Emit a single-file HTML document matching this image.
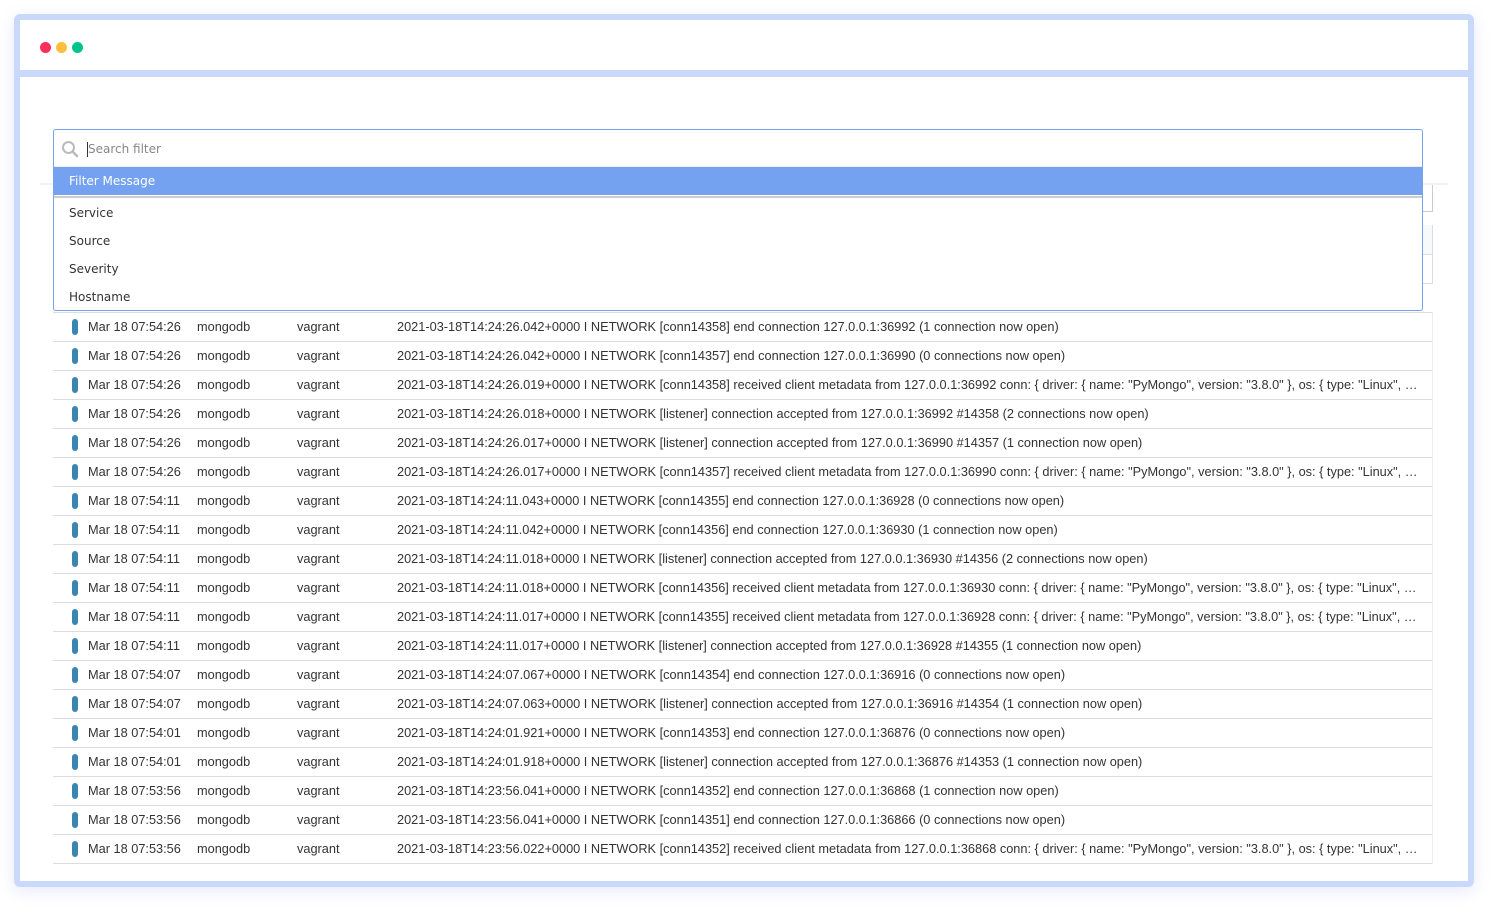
<!DOCTYPE html>
<html><head><meta charset="utf-8"><style>
*{box-sizing:border-box;margin:0;padding:0}
body{width:1494px;height:906px;background:#fff;position:relative;overflow:hidden;font-family:"Liberation Sans",sans-serif}
.frame{position:absolute;left:14px;top:14px;width:1460px;height:873px;border:6px solid #c9d9fb;border-radius:6px;background:#fff;box-shadow:0 4px 16px rgba(120,140,220,.18)}
.sep{position:absolute;left:14px;top:70px;width:1460px;height:7px;background:#c9d9fb}
.dot{position:absolute;top:42px;width:11px;height:11px;border-radius:50%}
.tbl{position:absolute;left:53px;top:312px;width:1380px;border-top:1px solid #ddd;border-right:1px solid #eee}
.row{height:29px;border-bottom:1px solid #ddd;position:relative;font-size:12.75px;color:#333;line-height:28px;white-space:nowrap}
.row .bar{position:absolute;left:19px;top:6px;width:6px;height:16px;border-radius:3px;background:#3a86b0}
.row span{position:absolute;top:0}
.c1{left:35px}.c2{left:144px}.c3{left:244px}.c4{left:344px;width:1025px;overflow:hidden;text-overflow:ellipsis}
.behind{position:absolute;left:53px;width:1380px;border-bottom:1px solid #ddd;border-right:1px solid #ddd}
.dd{position:absolute;left:53px;top:129px;width:1370px;height:182px;border:1px solid #75a2f0;border-radius:3px;background:#fff;font-family:"DejaVu Sans","Liberation Sans",sans-serif;font-size:12px;color:#333}
.dd .in{height:37px;position:relative;border-bottom:1px solid #eee}
.dd .in .ph{position:absolute;left:33px;top:12px;color:#888;border-left:1px solid #333;line-height:15px}
.hl{height:28px;background:#75a2f0;color:#fff;padding-left:15px;line-height:29px}
.gl{height:4px;border-top:1px solid #fff;border-bottom:1px solid #fff;background:#ccc}
.it{height:28px;line-height:28px;padding-left:15px}
</style></head><body>
<div class="frame"></div>
<div class="sep"></div>
<div class="dot" style="left:40px;background:#fc2f5b"></div>
<div class="dot" style="left:56px;background:#fdbf3b"></div>
<div class="dot" style="left:72px;background:#00c48c"></div>
<div style="position:absolute;left:40px;top:183px;width:1408px;height:2px;background:#f2f2f4"></div>
<div class="behind" style="top:185px;height:27px;border-color:#ccc"></div>
<div class="behind" style="top:225px;height:30px;background:#f8f9fb"></div>
<div class="behind" style="top:255px;height:29px"></div>
<div class="tbl">
<div class="row"><i class="bar"></i><span class="c1">Mar 18 07:54:26</span><span class="c2">mongodb</span><span class="c3">vagrant</span><span class="c4">2021-03-18T14:24:26.042+0000 I NETWORK [conn14358] end connection 127.0.0.1:36992 (1 connection now open)</span></div>
<div class="row"><i class="bar"></i><span class="c1">Mar 18 07:54:26</span><span class="c2">mongodb</span><span class="c3">vagrant</span><span class="c4">2021-03-18T14:24:26.042+0000 I NETWORK [conn14357] end connection 127.0.0.1:36990 (0 connections now open)</span></div>
<div class="row"><i class="bar"></i><span class="c1">Mar 18 07:54:26</span><span class="c2">mongodb</span><span class="c3">vagrant</span><span class="c4">2021-03-18T14:24:26.019+0000 I NETWORK [conn14358] received client metadata from 127.0.0.1:36992 conn: { driver: { name: "PyMongo", version: "3.8.0" }, os: { type: "Linux", name: "Linux" } }</span></div>
<div class="row"><i class="bar"></i><span class="c1">Mar 18 07:54:26</span><span class="c2">mongodb</span><span class="c3">vagrant</span><span class="c4">2021-03-18T14:24:26.018+0000 I NETWORK [listener] connection accepted from 127.0.0.1:36992 #14358 (2 connections now open)</span></div>
<div class="row"><i class="bar"></i><span class="c1">Mar 18 07:54:26</span><span class="c2">mongodb</span><span class="c3">vagrant</span><span class="c4">2021-03-18T14:24:26.017+0000 I NETWORK [listener] connection accepted from 127.0.0.1:36990 #14357 (1 connection now open)</span></div>
<div class="row"><i class="bar"></i><span class="c1">Mar 18 07:54:26</span><span class="c2">mongodb</span><span class="c3">vagrant</span><span class="c4">2021-03-18T14:24:26.017+0000 I NETWORK [conn14357] received client metadata from 127.0.0.1:36990 conn: { driver: { name: "PyMongo", version: "3.8.0" }, os: { type: "Linux", name: "Linux" } }</span></div>
<div class="row"><i class="bar"></i><span class="c1">Mar 18 07:54:11</span><span class="c2">mongodb</span><span class="c3">vagrant</span><span class="c4">2021-03-18T14:24:11.043+0000 I NETWORK [conn14355] end connection 127.0.0.1:36928 (0 connections now open)</span></div>
<div class="row"><i class="bar"></i><span class="c1">Mar 18 07:54:11</span><span class="c2">mongodb</span><span class="c3">vagrant</span><span class="c4">2021-03-18T14:24:11.042+0000 I NETWORK [conn14356] end connection 127.0.0.1:36930 (1 connection now open)</span></div>
<div class="row"><i class="bar"></i><span class="c1">Mar 18 07:54:11</span><span class="c2">mongodb</span><span class="c3">vagrant</span><span class="c4">2021-03-18T14:24:11.018+0000 I NETWORK [listener] connection accepted from 127.0.0.1:36930 #14356 (2 connections now open)</span></div>
<div class="row"><i class="bar"></i><span class="c1">Mar 18 07:54:11</span><span class="c2">mongodb</span><span class="c3">vagrant</span><span class="c4">2021-03-18T14:24:11.018+0000 I NETWORK [conn14356] received client metadata from 127.0.0.1:36930 conn: { driver: { name: "PyMongo", version: "3.8.0" }, os: { type: "Linux", name: "Linux" } }</span></div>
<div class="row"><i class="bar"></i><span class="c1">Mar 18 07:54:11</span><span class="c2">mongodb</span><span class="c3">vagrant</span><span class="c4">2021-03-18T14:24:11.017+0000 I NETWORK [conn14355] received client metadata from 127.0.0.1:36928 conn: { driver: { name: "PyMongo", version: "3.8.0" }, os: { type: "Linux", name: "Linux" } }</span></div>
<div class="row"><i class="bar"></i><span class="c1">Mar 18 07:54:11</span><span class="c2">mongodb</span><span class="c3">vagrant</span><span class="c4">2021-03-18T14:24:11.017+0000 I NETWORK [listener] connection accepted from 127.0.0.1:36928 #14355 (1 connection now open)</span></div>
<div class="row"><i class="bar"></i><span class="c1">Mar 18 07:54:07</span><span class="c2">mongodb</span><span class="c3">vagrant</span><span class="c4">2021-03-18T14:24:07.067+0000 I NETWORK [conn14354] end connection 127.0.0.1:36916 (0 connections now open)</span></div>
<div class="row"><i class="bar"></i><span class="c1">Mar 18 07:54:07</span><span class="c2">mongodb</span><span class="c3">vagrant</span><span class="c4">2021-03-18T14:24:07.063+0000 I NETWORK [listener] connection accepted from 127.0.0.1:36916 #14354 (1 connection now open)</span></div>
<div class="row"><i class="bar"></i><span class="c1">Mar 18 07:54:01</span><span class="c2">mongodb</span><span class="c3">vagrant</span><span class="c4">2021-03-18T14:24:01.921+0000 I NETWORK [conn14353] end connection 127.0.0.1:36876 (0 connections now open)</span></div>
<div class="row"><i class="bar"></i><span class="c1">Mar 18 07:54:01</span><span class="c2">mongodb</span><span class="c3">vagrant</span><span class="c4">2021-03-18T14:24:01.918+0000 I NETWORK [listener] connection accepted from 127.0.0.1:36876 #14353 (1 connection now open)</span></div>
<div class="row"><i class="bar"></i><span class="c1">Mar 18 07:53:56</span><span class="c2">mongodb</span><span class="c3">vagrant</span><span class="c4">2021-03-18T14:23:56.041+0000 I NETWORK [conn14352] end connection 127.0.0.1:36868 (1 connection now open)</span></div>
<div class="row"><i class="bar"></i><span class="c1">Mar 18 07:53:56</span><span class="c2">mongodb</span><span class="c3">vagrant</span><span class="c4">2021-03-18T14:23:56.041+0000 I NETWORK [conn14351] end connection 127.0.0.1:36866 (0 connections now open)</span></div>
<div class="row"><i class="bar"></i><span class="c1">Mar 18 07:53:56</span><span class="c2">mongodb</span><span class="c3">vagrant</span><span class="c4">2021-03-18T14:23:56.022+0000 I NETWORK [conn14352] received client metadata from 127.0.0.1:36868 conn: { driver: { name: "PyMongo", version: "3.8.0" }, os: { type: "Linux", name: "Linux" } }</span></div>
</div>
<div class="dd">
<div class="in">
<svg style="position:absolute;left:7px;top:10px" width="18" height="18" viewBox="0 0 18 18"><circle cx="7.5" cy="7.5" r="5.5" fill="none" stroke="#bbb" stroke-width="2"/><line x1="11.5" y1="11.5" x2="16" y2="16" stroke="#bbb" stroke-width="2.5" stroke-linecap="round"/></svg>
<div class="ph">Search filter</div>
</div>
<div class="hl">Filter Message</div>
<div class="gl"></div>
<div class="it">Service</div>
<div class="it">Source</div>
<div class="it">Severity</div>
<div class="it">Hostname</div>
</div>
</body></html>
